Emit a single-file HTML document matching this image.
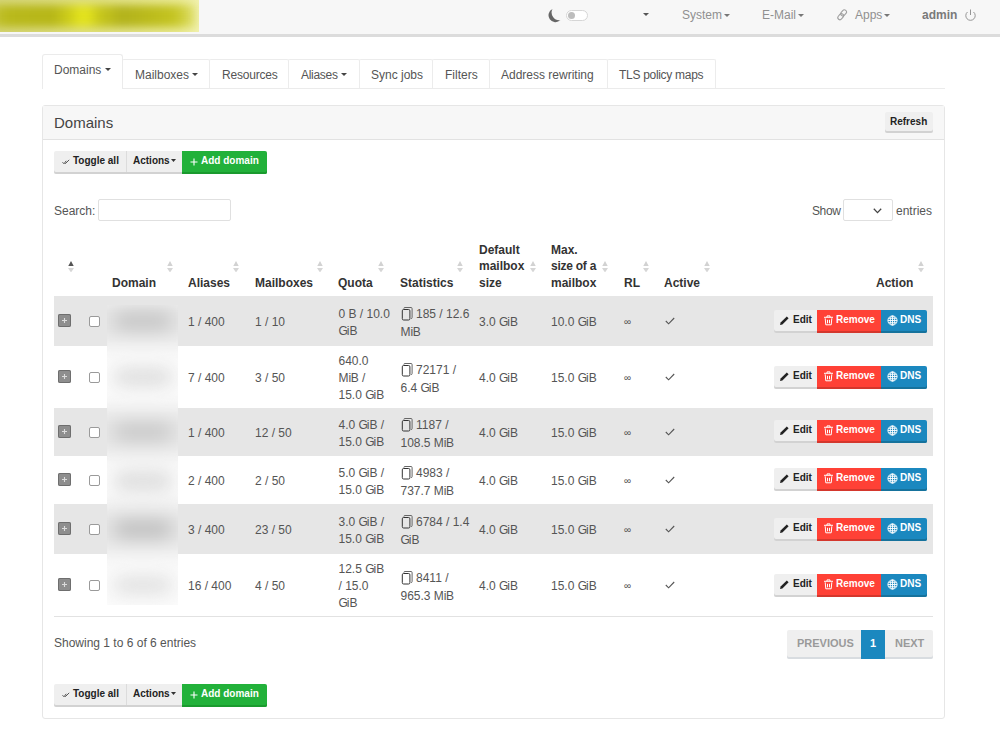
<!DOCTYPE html>
<html><head><meta charset="utf-8"><title>Domains</title>
<style>
html,body{margin:0;padding:0;background:#fff;width:1000px;height:750px;overflow:hidden;position:relative}
body{font-family:"Liberation Sans",sans-serif}
.a{position:absolute}
.t{position:absolute;white-space:nowrap;font-family:"Liberation Sans",sans-serif}
</style></head><body>
<div class="a" style="left:0px;top:0px;width:1000px;height:34px;background:#f7f7f7"></div>
<div class="a" style="left:0px;top:34px;width:1000px;height:3px;background:#dcdcdc"></div>
<div class="a" style="left:0;top:0;width:199px;height:32px;overflow:hidden;background:linear-gradient(90deg,#d6d67a,#e0e084 50%,#eaea96 90%,#f2f2b0)">
<div class="a" style="left:-8px;top:5px;width:204px;height:22px;filter:blur(4px);background:
radial-gradient(ellipse 14px 20px at 93px 11px,rgba(230,230,30,1) 0%,rgba(230,230,30,0) 100%),
linear-gradient(90deg,#c4c436 0px,#b9b91c 16px,#b6b618 60px,#cccc1a 76px,#dede1c 90px,#cccc1c 102px,#b2b21c 130px,#bcbc1c 160px,#c4c422 182px,#d6d650 196px,#e4e488 204px)"></div></div>
<svg class="a" style="left:545px;top:7.5px" width="16.5" height="16.5" viewBox="0 0 15 15"><path d="M6.8 0.9 A6.3 6.3 0 1 0 14 11.0 A7.0 7.0 0 0 1 6.8 0.9 Z" fill="#666"/></svg>
<div class="a" style="left:566px;top:9.8px;width:22.4px;height:11px;background:#fff;border:1.4px solid #d6d6d6;border-radius:6px;box-sizing:border-box"></div>
<div class="a" style="left:568.2px;top:11.8px;width:7px;height:7px;background:#bdbdbd;border-radius:50%"></div>
<svg class="a" style="left:642.5px;top:13px" width="6" height="3" viewBox="0 0 6 3"><path d="M0 0 H6 L3.0 3 Z" fill="#555"/></svg>
<div class="t" style="left:682px;top:9px;font-size:12px;line-height:12px;font-weight:400;color:#909090;">System</div>
<svg class="a" style="left:723.5px;top:13.5px" width="6" height="3" viewBox="0 0 6 3"><path d="M0 0 H6 L3.0 3 Z" fill="#777"/></svg>
<div class="t" style="left:762px;top:9px;font-size:12px;line-height:12px;font-weight:400;color:#909090;">E-Mail</div>
<svg class="a" style="left:797.5px;top:13.5px" width="6" height="3" viewBox="0 0 6 3"><path d="M0 0 H6 L3.0 3 Z" fill="#777"/></svg>
<svg class="a" style="left:836px;top:9px" width="13" height="13" viewBox="0 0 13 13"><g fill="none" stroke="#a0a0a0" stroke-width="1.1"><rect x="-2.1" y="-3.3" width="4.2" height="6.6" rx="2.1" transform="translate(7.6 3.9) rotate(40)"/><rect x="-2.1" y="-3.3" width="4.2" height="6.6" rx="2.1" transform="translate(4.7 7.7) rotate(40)"/></g></svg>
<div class="t" style="left:855px;top:9px;font-size:12px;line-height:12px;font-weight:400;color:#909090;">Apps</div>
<svg class="a" style="left:883.5px;top:13.5px" width="6" height="3" viewBox="0 0 6 3"><path d="M0 0 H6 L3.0 3 Z" fill="#777"/></svg>
<div class="t" style="left:922px;top:9px;font-size:12px;line-height:12px;font-weight:700;color:#7a7a7a;">admin</div>
<svg class="a" style="left:965px;top:9px" width="12" height="12" viewBox="0 0 12 12"><path d="M2.5 3.0 A4.7 4.7 0 1 0 8.5 3.0" fill="none" stroke="#959595" stroke-width="1"/><path d="M5.5 0.5 V6" stroke="#959595" stroke-width="1"/></svg>
<div class="a" style="left:122px;top:59px;width:88px;height:29px;border:1px solid #ececec;border-bottom:none;border-radius:2px 2px 0 0;box-sizing:border-box;background:#fff"></div>
<div class="a" style="left:209px;top:59px;width:80px;height:29px;border:1px solid #ececec;border-bottom:none;border-radius:2px 2px 0 0;box-sizing:border-box;background:#fff"></div>
<div class="a" style="left:288px;top:59px;width:72px;height:29px;border:1px solid #ececec;border-bottom:none;border-radius:2px 2px 0 0;box-sizing:border-box;background:#fff"></div>
<div class="a" style="left:359px;top:59px;width:74px;height:29px;border:1px solid #ececec;border-bottom:none;border-radius:2px 2px 0 0;box-sizing:border-box;background:#fff"></div>
<div class="a" style="left:432px;top:59px;width:58px;height:29px;border:1px solid #ececec;border-bottom:none;border-radius:2px 2px 0 0;box-sizing:border-box;background:#fff"></div>
<div class="a" style="left:489px;top:59px;width:119px;height:29px;border:1px solid #ececec;border-bottom:none;border-radius:2px 2px 0 0;box-sizing:border-box;background:#fff"></div>
<div class="a" style="left:607px;top:59px;width:109px;height:29px;border:1px solid #ececec;border-bottom:none;border-radius:2px 2px 0 0;box-sizing:border-box;background:#fff"></div>
<div class="a" style="left:42px;top:88px;width:903px;height:1px;background:#ebebeb"></div>
<div class="a" style="left:42px;top:54px;width:81px;height:35px;border:1px solid #ebebeb;border-bottom:none;border-radius:3px 3px 0 0;box-sizing:border-box;background:#fff"></div>
<div class="t" style="left:54px;top:64px;font-size:12px;line-height:12px;font-weight:400;color:#555;">Domains</div>
<svg class="a" style="left:104.5px;top:68px" width="6" height="3" viewBox="0 0 6 3"><path d="M0 0 H6 L3.0 3 Z" fill="#444"/></svg>
<div class="t" style="left:135px;top:69px;font-size:12px;line-height:12px;font-weight:400;color:#555;">Mailboxes</div>
<div class="t" style="left:222px;top:69px;font-size:12px;line-height:12px;font-weight:400;color:#555;letter-spacing:-0.2px">Resources</div>
<div class="t" style="left:301px;top:69px;font-size:12px;line-height:12px;font-weight:400;color:#555;letter-spacing:-0.3px">Aliases</div>
<div class="t" style="left:371px;top:69px;font-size:12px;line-height:12px;font-weight:400;color:#555;">Sync jobs</div>
<div class="t" style="left:445px;top:69px;font-size:12px;line-height:12px;font-weight:400;color:#555;">Filters</div>
<div class="t" style="left:501px;top:69px;font-size:12px;line-height:12px;font-weight:400;color:#555;">Address rewriting</div>
<div class="t" style="left:619px;top:69px;font-size:12px;line-height:12px;font-weight:400;color:#555;letter-spacing:-0.3px">TLS policy maps</div>
<svg class="a" style="left:191.5px;top:73px" width="6" height="3" viewBox="0 0 6 3"><path d="M0 0 H6 L3.0 3 Z" fill="#444"/></svg>
<svg class="a" style="left:341px;top:73px" width="6" height="3" viewBox="0 0 6 3"><path d="M0 0 H6 L3.0 3 Z" fill="#444"/></svg>
<div class="a" style="left:42px;top:105px;width:903px;height:614px;border:1px solid #e6e6e6;border-radius:3px;box-sizing:border-box"></div>
<div class="a" style="left:43px;top:106px;width:901px;height:34px;background:#f7f7f7;border-bottom:1px solid #e2e2e2;box-sizing:border-box"></div>
<div class="t" style="left:54px;top:115px;font-size:15px;line-height:15px;font-weight:400;color:#444;">Domains</div>
<div class="a" style="left:885px;top:112px;width:48px;height:21px;background:#efefef;border-radius:2px;box-shadow:inset 0 -2px 0 #d2d2d2"></div>
<div class="t" style="left:890px;top:117px;font-size:10px;line-height:10px;font-weight:700;color:#222;">Refresh</div>
<div class="a" style="left:54px;top:151px;width:213px;height:23px;border-radius:2px;overflow:hidden;background:#efefef;box-shadow:inset 0 -2px 0 #d2d2d2"></div>
<div class="a" style="left:126px;top:151px;width:1px;height:21px;background:#dcdcdc"></div>
<div class="a" style="left:182px;top:151px;width:85px;height:23px;background:#22b13a;box-shadow:inset 0 -2px 0 #1a9a2e;border-radius:0 2px 2px 0"></div>
<svg class="a" style="left:62px;top:159px" width="8" height="6" viewBox="0 0 8 6"><path d="M0.5 3.2 L2 4.8 L4.2 1.8 M3.2 4.8 L7.2 0.8" fill="none" stroke="#555" stroke-width="1"/></svg>
<div class="t" style="left:73px;top:156px;font-size:10px;line-height:10px;font-weight:700;color:#222;">Toggle all</div>
<div class="t" style="left:133px;top:156px;font-size:10px;line-height:10px;font-weight:700;color:#222;">Actions</div>
<svg class="a" style="left:171px;top:159px" width="5" height="3" viewBox="0 0 5 3"><path d="M0 0 H5 L2.5 3 Z" fill="#333"/></svg>
<svg class="a" style="left:190px;top:157.5px" width="8" height="8" viewBox="0 0 8 8"><path d="M4 0.5 V7.5 M0.5 4 H7.5" stroke="#fff" stroke-width="1.1"/></svg>
<div class="t" style="left:201px;top:156px;font-size:10px;line-height:10px;font-weight:700;color:#fff;">Add domain</div>
<div class="t" style="left:54px;top:205px;font-size:12px;line-height:12px;font-weight:400;color:#555;">Search:</div>
<div class="a" style="left:98px;top:199px;width:133px;height:22px;border:1px solid #e0e0e0;border-radius:2px;box-sizing:border-box;background:#fff"></div>
<div class="t" style="left:812px;top:205px;font-size:12px;line-height:12px;font-weight:400;color:#555;letter-spacing:-0.4px">Show</div>
<div class="a" style="left:843px;top:199px;width:50px;height:22px;border:1px solid #e0e0e0;border-radius:2px;box-sizing:border-box;background:#fff"></div>
<svg class="a" style="left:873px;top:207.5px" width="9" height="6" viewBox="0 0 9 6"><path d="M0.8 0.8 L4.5 4.6 L8.2 0.8" fill="none" stroke="#444" stroke-width="1.3"/></svg>
<div class="t" style="left:896px;top:205px;font-size:12px;line-height:12px;font-weight:400;color:#555;">entries</div>
<svg class="a" style="left:68.3px;top:260.5px" width="6" height="5.5" viewBox="0 0 6 5.5"><path d="M3 0 L6 5.5 H0 Z" fill="#555"/></svg>
<svg class="a" style="left:68.3px;top:267.5px" width="6" height="4.5" viewBox="0 0 6 4.5"><path d="M0 0 H6 L3 4.5 Z" fill="#d6d6d6"/></svg>
<svg class="a" style="left:167px;top:260.5px" width="6" height="5.5" viewBox="0 0 6 5.5"><path d="M3 0 L6 5.5 H0 Z" fill="#d2d2d2"/></svg>
<svg class="a" style="left:167px;top:267.5px" width="6" height="4.5" viewBox="0 0 6 4.5"><path d="M0 0 H6 L3 4.5 Z" fill="#d6d6d6"/></svg>
<svg class="a" style="left:232.6px;top:260.5px" width="6" height="5.5" viewBox="0 0 6 5.5"><path d="M3 0 L6 5.5 H0 Z" fill="#d2d2d2"/></svg>
<svg class="a" style="left:232.6px;top:267.5px" width="6" height="4.5" viewBox="0 0 6 4.5"><path d="M0 0 H6 L3 4.5 Z" fill="#d6d6d6"/></svg>
<svg class="a" style="left:316.6px;top:260.5px" width="6" height="5.5" viewBox="0 0 6 5.5"><path d="M3 0 L6 5.5 H0 Z" fill="#d2d2d2"/></svg>
<svg class="a" style="left:316.6px;top:267.5px" width="6" height="4.5" viewBox="0 0 6 4.5"><path d="M0 0 H6 L3 4.5 Z" fill="#d6d6d6"/></svg>
<svg class="a" style="left:378px;top:260.5px" width="6" height="5.5" viewBox="0 0 6 5.5"><path d="M3 0 L6 5.5 H0 Z" fill="#d2d2d2"/></svg>
<svg class="a" style="left:378px;top:267.5px" width="6" height="4.5" viewBox="0 0 6 4.5"><path d="M0 0 H6 L3 4.5 Z" fill="#d6d6d6"/></svg>
<svg class="a" style="left:457.3px;top:260.5px" width="6" height="5.5" viewBox="0 0 6 5.5"><path d="M3 0 L6 5.5 H0 Z" fill="#d2d2d2"/></svg>
<svg class="a" style="left:457.3px;top:267.5px" width="6" height="4.5" viewBox="0 0 6 4.5"><path d="M0 0 H6 L3 4.5 Z" fill="#d6d6d6"/></svg>
<svg class="a" style="left:529.8px;top:260.5px" width="6" height="5.5" viewBox="0 0 6 5.5"><path d="M3 0 L6 5.5 H0 Z" fill="#d2d2d2"/></svg>
<svg class="a" style="left:529.8px;top:267.5px" width="6" height="4.5" viewBox="0 0 6 4.5"><path d="M0 0 H6 L3 4.5 Z" fill="#d6d6d6"/></svg>
<svg class="a" style="left:601.8px;top:260.5px" width="6" height="5.5" viewBox="0 0 6 5.5"><path d="M3 0 L6 5.5 H0 Z" fill="#d2d2d2"/></svg>
<svg class="a" style="left:601.8px;top:267.5px" width="6" height="4.5" viewBox="0 0 6 4.5"><path d="M0 0 H6 L3 4.5 Z" fill="#d6d6d6"/></svg>
<svg class="a" style="left:642.6px;top:260.5px" width="6" height="5.5" viewBox="0 0 6 5.5"><path d="M3 0 L6 5.5 H0 Z" fill="#d2d2d2"/></svg>
<svg class="a" style="left:642.6px;top:267.5px" width="6" height="4.5" viewBox="0 0 6 4.5"><path d="M0 0 H6 L3 4.5 Z" fill="#d6d6d6"/></svg>
<svg class="a" style="left:704px;top:260.5px" width="6" height="5.5" viewBox="0 0 6 5.5"><path d="M3 0 L6 5.5 H0 Z" fill="#d2d2d2"/></svg>
<svg class="a" style="left:704px;top:267.5px" width="6" height="4.5" viewBox="0 0 6 4.5"><path d="M0 0 H6 L3 4.5 Z" fill="#d6d6d6"/></svg>
<svg class="a" style="left:917.6px;top:260.5px" width="6" height="5.5" viewBox="0 0 6 5.5"><path d="M3 0 L6 5.5 H0 Z" fill="#d2d2d2"/></svg>
<svg class="a" style="left:917.6px;top:267.5px" width="6" height="4.5" viewBox="0 0 6 4.5"><path d="M0 0 H6 L3 4.5 Z" fill="#d6d6d6"/></svg>
<div class="t" style="left:112px;top:277px;font-size:12px;line-height:12px;font-weight:700;color:#333;">Domain</div>
<div class="t" style="left:188px;top:277px;font-size:12px;line-height:12px;font-weight:700;color:#333;">Aliases</div>
<div class="t" style="left:255px;top:277px;font-size:12px;line-height:12px;font-weight:700;color:#333;">Mailboxes</div>
<div class="t" style="left:338px;top:277px;font-size:12px;line-height:12px;font-weight:700;color:#333;">Quota</div>
<div class="t" style="left:400px;top:277px;font-size:12px;line-height:12px;font-weight:700;color:#333;">Statistics</div>
<div class="t" style="left:479px;top:244px;font-size:12px;line-height:12px;font-weight:700;color:#333;">Default</div>
<div class="t" style="left:479px;top:260px;font-size:12px;line-height:12px;font-weight:700;color:#333;">mailbox</div>
<div class="t" style="left:479px;top:277px;font-size:12px;line-height:12px;font-weight:700;color:#333;">size</div>
<div class="t" style="left:551px;top:244px;font-size:12px;line-height:12px;font-weight:700;color:#333;">Max.</div>
<div class="t" style="left:551px;top:260px;font-size:12px;line-height:12px;font-weight:700;color:#333;letter-spacing:-0.25px">size of a</div>
<div class="t" style="left:551px;top:277px;font-size:12px;line-height:12px;font-weight:700;color:#333;">mailbox</div>
<div class="t" style="left:624px;top:277px;font-size:12px;line-height:12px;font-weight:700;color:#333;">RL</div>
<div class="t" style="left:664px;top:277px;font-size:12px;line-height:12px;font-weight:700;color:#333;">Active</div>
<div class="t" style="left:876px;top:277px;font-size:12px;line-height:12px;font-weight:700;color:#333;">Action</div>
<div class="a" style="left:54px;top:296px;width:879px;height:50px;background:#e6e6e6"></div>
<div class="a" style="left:58px;top:314px;width:13px;height:13px;background:#8e8e8e;border-radius:2px;box-shadow:inset 0 0 0 1px #6e6e6e"></div>
<svg class="a" style="left:58px;top:314px" width="13" height="13" viewBox="0 0 13 13"><path d="M6.5 4 V9 M4 6.5 H9" stroke="#dcdcdc" stroke-width="1.1"/></svg>
<div class="a" style="left:89px;top:316px;width:11px;height:11px;background:#fff;border:1px solid #9a9a9a;border-radius:2px;box-sizing:border-box"></div>
<div class="t" style="left:188px;top:316px;font-size:12px;line-height:12px;font-weight:400;color:#555;">1 / 400</div>
<div class="t" style="left:255px;top:316px;font-size:12px;line-height:12px;font-weight:400;color:#555;">1 / 10</div>
<div class="t" style="left:338.5px;top:308px;font-size:12px;line-height:12px;font-weight:400;color:#555;">0 B / 10.0</div>
<div class="t" style="left:338.5px;top:325px;font-size:12px;line-height:12px;font-weight:400;color:#555;"><span style="letter-spacing:-1px">G</span>iB</div>
<svg class="a" style="left:400px;top:306px" width="14" height="16" viewBox="0 0 14 16"><path d="M3.8 2.6 Q3.8 1.5 5 1.5 H11 Q12.1 1.5 12.1 2.6 V11.5 Q12.1 12.6 11 12.6" fill="none" stroke="#666" stroke-width="1"/><rect x="2.3" y="3.5" width="7.6" height="10.5" rx="1.3" fill="none" stroke="#333" stroke-width="1"/></svg>
<div class="t" style="left:416px;top:308px;font-size:12px;line-height:12px;font-weight:400;color:#555;">185 / 12.6</div>
<div class="t" style="left:400.5px;top:326px;font-size:12px;line-height:12px;font-weight:400;color:#555;">M<span style="letter-spacing:-0.5px">i</span>B</div>
<div class="t" style="left:479px;top:316px;font-size:12px;line-height:12px;font-weight:400;color:#555;">3.0 <span style="letter-spacing:-1px">G</span>iB</div>
<div class="t" style="left:551px;top:316px;font-size:12px;line-height:12px;font-weight:400;color:#555;">10.0 <span style="letter-spacing:-1px">G</span>iB</div>
<div class="t" style="left:624px;top:317px;font-size:10px;line-height:10px;font-weight:400;color:#555;">&#8734;</div>
<svg class="a" style="left:665px;top:317px" width="10" height="8" viewBox="0 0 10 8"><path d="M0.8 4 L3.6 6.8 L9.2 1" fill="none" stroke="#555" stroke-width="1.1"/></svg>
<div class="a" style="left:774px;top:310px;width:43px;height:23px;background:#efefef;border-radius:2px 0 0 2px;box-shadow:inset 0 -2px 0 #d2d2d2"></div>
<svg class="a" style="left:779px;top:315px" width="11" height="11" viewBox="0 0 11 11"><path d="M1 10 L1.6 7.6 L7.8 1.4 L9.6 3.2 L3.4 9.4 Z" fill="#222"/></svg>
<div class="t" style="left:793px;top:315px;font-size:10px;line-height:10px;font-weight:700;color:#222;">Edit</div>
<div class="a" style="left:817px;top:310px;width:64px;height:23px;background:#ff4136;box-shadow:inset 0 -2px 0 #d4372d"></div>
<svg class="a" style="left:823px;top:315px" width="11" height="11" viewBox="0 0 11 11"><g fill="none" stroke="#fff" stroke-width="1"><path d="M1 2.3 H10 M4 2.3 V0.9 H7 V2.3 M2.2 3.3 L2.8 9.8 H8.2 L8.8 3.3 M4.5 4.8 V8.3 M6.5 4.8 V8.3"/></g></svg>
<div class="t" style="left:836px;top:315px;font-size:10px;line-height:10px;font-weight:700;color:#fff;">Remove</div>
<div class="a" style="left:881px;top:310px;width:46px;height:23px;background:#1b88bf;border-radius:0 2px 2px 0;box-shadow:inset 0 -2px 0 #16729c"></div>
<svg class="a" style="left:887px;top:315px" width="11" height="11" viewBox="0 0 11 11"><g fill="none" stroke="#fff" stroke-width="0.9"><circle cx="5.5" cy="5.5" r="4.6"/><ellipse cx="5.5" cy="5.5" rx="2.2" ry="4.6"/><path d="M5.5 0.9 V10.1 M0.9 5.5 H10.1 M1.4 3.3 H9.6 M1.4 7.7 H9.6"/></g></svg>
<div class="t" style="left:900px;top:315px;font-size:10px;line-height:10px;font-weight:700;color:#fff;">DNS</div>
<div class="a" style="left:58px;top:370px;width:13px;height:13px;background:#8e8e8e;border-radius:2px;box-shadow:inset 0 0 0 1px #6e6e6e"></div>
<svg class="a" style="left:58px;top:370px" width="13" height="13" viewBox="0 0 13 13"><path d="M6.5 4 V9 M4 6.5 H9" stroke="#dcdcdc" stroke-width="1.1"/></svg>
<div class="a" style="left:89px;top:372px;width:11px;height:11px;background:#fff;border:1px solid #9a9a9a;border-radius:2px;box-sizing:border-box"></div>
<div class="t" style="left:188px;top:372px;font-size:12px;line-height:12px;font-weight:400;color:#555;">7 / 400</div>
<div class="t" style="left:255px;top:372px;font-size:12px;line-height:12px;font-weight:400;color:#555;">3 / 50</div>
<div class="t" style="left:338.5px;top:355px;font-size:12px;line-height:12px;font-weight:400;color:#555;">640.0</div>
<div class="t" style="left:338.5px;top:372px;font-size:12px;line-height:12px;font-weight:400;color:#555;">M<span style="letter-spacing:-0.5px">i</span>B /</div>
<div class="t" style="left:338.5px;top:389px;font-size:12px;line-height:12px;font-weight:400;color:#555;">15.0 <span style="letter-spacing:-1px">G</span>iB</div>
<svg class="a" style="left:400px;top:362px" width="14" height="16" viewBox="0 0 14 16"><path d="M3.8 2.6 Q3.8 1.5 5 1.5 H11 Q12.1 1.5 12.1 2.6 V11.5 Q12.1 12.6 11 12.6" fill="none" stroke="#666" stroke-width="1"/><rect x="2.3" y="3.5" width="7.6" height="10.5" rx="1.3" fill="none" stroke="#333" stroke-width="1"/></svg>
<div class="t" style="left:416px;top:364px;font-size:12px;line-height:12px;font-weight:400;color:#555;">72171 /</div>
<div class="t" style="left:400.5px;top:382px;font-size:12px;line-height:12px;font-weight:400;color:#555;">6.4 <span style="letter-spacing:-1px">G</span>iB</div>
<div class="t" style="left:479px;top:372px;font-size:12px;line-height:12px;font-weight:400;color:#555;">4.0 <span style="letter-spacing:-1px">G</span>iB</div>
<div class="t" style="left:551px;top:372px;font-size:12px;line-height:12px;font-weight:400;color:#555;">15.0 <span style="letter-spacing:-1px">G</span>iB</div>
<div class="t" style="left:624px;top:373px;font-size:10px;line-height:10px;font-weight:400;color:#555;">&#8734;</div>
<svg class="a" style="left:665px;top:373px" width="10" height="8" viewBox="0 0 10 8"><path d="M0.8 4 L3.6 6.8 L9.2 1" fill="none" stroke="#555" stroke-width="1.1"/></svg>
<div class="a" style="left:774px;top:366px;width:43px;height:23px;background:#efefef;border-radius:2px 0 0 2px;box-shadow:inset 0 -2px 0 #d2d2d2"></div>
<svg class="a" style="left:779px;top:371px" width="11" height="11" viewBox="0 0 11 11"><path d="M1 10 L1.6 7.6 L7.8 1.4 L9.6 3.2 L3.4 9.4 Z" fill="#222"/></svg>
<div class="t" style="left:793px;top:371px;font-size:10px;line-height:10px;font-weight:700;color:#222;">Edit</div>
<div class="a" style="left:817px;top:366px;width:64px;height:23px;background:#ff4136;box-shadow:inset 0 -2px 0 #d4372d"></div>
<svg class="a" style="left:823px;top:371px" width="11" height="11" viewBox="0 0 11 11"><g fill="none" stroke="#fff" stroke-width="1"><path d="M1 2.3 H10 M4 2.3 V0.9 H7 V2.3 M2.2 3.3 L2.8 9.8 H8.2 L8.8 3.3 M4.5 4.8 V8.3 M6.5 4.8 V8.3"/></g></svg>
<div class="t" style="left:836px;top:371px;font-size:10px;line-height:10px;font-weight:700;color:#fff;">Remove</div>
<div class="a" style="left:881px;top:366px;width:46px;height:23px;background:#1b88bf;border-radius:0 2px 2px 0;box-shadow:inset 0 -2px 0 #16729c"></div>
<svg class="a" style="left:887px;top:371px" width="11" height="11" viewBox="0 0 11 11"><g fill="none" stroke="#fff" stroke-width="0.9"><circle cx="5.5" cy="5.5" r="4.6"/><ellipse cx="5.5" cy="5.5" rx="2.2" ry="4.6"/><path d="M5.5 0.9 V10.1 M0.9 5.5 H10.1 M1.4 3.3 H9.6 M1.4 7.7 H9.6"/></g></svg>
<div class="t" style="left:900px;top:371px;font-size:10px;line-height:10px;font-weight:700;color:#fff;">DNS</div>
<div class="a" style="left:54px;top:408px;width:879px;height:48px;background:#e6e6e6"></div>
<div class="a" style="left:58px;top:425px;width:13px;height:13px;background:#8e8e8e;border-radius:2px;box-shadow:inset 0 0 0 1px #6e6e6e"></div>
<svg class="a" style="left:58px;top:425px" width="13" height="13" viewBox="0 0 13 13"><path d="M6.5 4 V9 M4 6.5 H9" stroke="#dcdcdc" stroke-width="1.1"/></svg>
<div class="a" style="left:89px;top:427px;width:11px;height:11px;background:#fff;border:1px solid #9a9a9a;border-radius:2px;box-sizing:border-box"></div>
<div class="t" style="left:188px;top:427px;font-size:12px;line-height:12px;font-weight:400;color:#555;">1 / 400</div>
<div class="t" style="left:255px;top:427px;font-size:12px;line-height:12px;font-weight:400;color:#555;">12 / 50</div>
<div class="t" style="left:338.5px;top:419px;font-size:12px;line-height:12px;font-weight:400;color:#555;">4.0 <span style="letter-spacing:-1px">G</span>iB /</div>
<div class="t" style="left:338.5px;top:436px;font-size:12px;line-height:12px;font-weight:400;color:#555;">15.0 <span style="letter-spacing:-1px">G</span>iB</div>
<svg class="a" style="left:400px;top:417px" width="14" height="16" viewBox="0 0 14 16"><path d="M3.8 2.6 Q3.8 1.5 5 1.5 H11 Q12.1 1.5 12.1 2.6 V11.5 Q12.1 12.6 11 12.6" fill="none" stroke="#666" stroke-width="1"/><rect x="2.3" y="3.5" width="7.6" height="10.5" rx="1.3" fill="none" stroke="#333" stroke-width="1"/></svg>
<div class="t" style="left:416px;top:419px;font-size:12px;line-height:12px;font-weight:400;color:#555;">1187 /</div>
<div class="t" style="left:400.5px;top:437px;font-size:12px;line-height:12px;font-weight:400;color:#555;">108.5 M<span style="letter-spacing:-0.5px">i</span>B</div>
<div class="t" style="left:479px;top:427px;font-size:12px;line-height:12px;font-weight:400;color:#555;">4.0 <span style="letter-spacing:-1px">G</span>iB</div>
<div class="t" style="left:551px;top:427px;font-size:12px;line-height:12px;font-weight:400;color:#555;">15.0 <span style="letter-spacing:-1px">G</span>iB</div>
<div class="t" style="left:624px;top:428px;font-size:10px;line-height:10px;font-weight:400;color:#555;">&#8734;</div>
<svg class="a" style="left:665px;top:428px" width="10" height="8" viewBox="0 0 10 8"><path d="M0.8 4 L3.6 6.8 L9.2 1" fill="none" stroke="#555" stroke-width="1.1"/></svg>
<div class="a" style="left:774px;top:420px;width:43px;height:23px;background:#efefef;border-radius:2px 0 0 2px;box-shadow:inset 0 -2px 0 #d2d2d2"></div>
<svg class="a" style="left:779px;top:425px" width="11" height="11" viewBox="0 0 11 11"><path d="M1 10 L1.6 7.6 L7.8 1.4 L9.6 3.2 L3.4 9.4 Z" fill="#222"/></svg>
<div class="t" style="left:793px;top:425px;font-size:10px;line-height:10px;font-weight:700;color:#222;">Edit</div>
<div class="a" style="left:817px;top:420px;width:64px;height:23px;background:#ff4136;box-shadow:inset 0 -2px 0 #d4372d"></div>
<svg class="a" style="left:823px;top:425px" width="11" height="11" viewBox="0 0 11 11"><g fill="none" stroke="#fff" stroke-width="1"><path d="M1 2.3 H10 M4 2.3 V0.9 H7 V2.3 M2.2 3.3 L2.8 9.8 H8.2 L8.8 3.3 M4.5 4.8 V8.3 M6.5 4.8 V8.3"/></g></svg>
<div class="t" style="left:836px;top:425px;font-size:10px;line-height:10px;font-weight:700;color:#fff;">Remove</div>
<div class="a" style="left:881px;top:420px;width:46px;height:23px;background:#1b88bf;border-radius:0 2px 2px 0;box-shadow:inset 0 -2px 0 #16729c"></div>
<svg class="a" style="left:887px;top:425px" width="11" height="11" viewBox="0 0 11 11"><g fill="none" stroke="#fff" stroke-width="0.9"><circle cx="5.5" cy="5.5" r="4.6"/><ellipse cx="5.5" cy="5.5" rx="2.2" ry="4.6"/><path d="M5.5 0.9 V10.1 M0.9 5.5 H10.1 M1.4 3.3 H9.6 M1.4 7.7 H9.6"/></g></svg>
<div class="t" style="left:900px;top:425px;font-size:10px;line-height:10px;font-weight:700;color:#fff;">DNS</div>
<div class="a" style="left:58px;top:473px;width:13px;height:13px;background:#8e8e8e;border-radius:2px;box-shadow:inset 0 0 0 1px #6e6e6e"></div>
<svg class="a" style="left:58px;top:473px" width="13" height="13" viewBox="0 0 13 13"><path d="M6.5 4 V9 M4 6.5 H9" stroke="#dcdcdc" stroke-width="1.1"/></svg>
<div class="a" style="left:89px;top:475px;width:11px;height:11px;background:#fff;border:1px solid #9a9a9a;border-radius:2px;box-sizing:border-box"></div>
<div class="t" style="left:188px;top:475px;font-size:12px;line-height:12px;font-weight:400;color:#555;">2 / 400</div>
<div class="t" style="left:255px;top:475px;font-size:12px;line-height:12px;font-weight:400;color:#555;">2 / 50</div>
<div class="t" style="left:338.5px;top:467px;font-size:12px;line-height:12px;font-weight:400;color:#555;">5.0 <span style="letter-spacing:-1px">G</span>iB /</div>
<div class="t" style="left:338.5px;top:484px;font-size:12px;line-height:12px;font-weight:400;color:#555;">15.0 <span style="letter-spacing:-1px">G</span>iB</div>
<svg class="a" style="left:400px;top:465px" width="14" height="16" viewBox="0 0 14 16"><path d="M3.8 2.6 Q3.8 1.5 5 1.5 H11 Q12.1 1.5 12.1 2.6 V11.5 Q12.1 12.6 11 12.6" fill="none" stroke="#666" stroke-width="1"/><rect x="2.3" y="3.5" width="7.6" height="10.5" rx="1.3" fill="none" stroke="#333" stroke-width="1"/></svg>
<div class="t" style="left:416px;top:467px;font-size:12px;line-height:12px;font-weight:400;color:#555;">4983 /</div>
<div class="t" style="left:400.5px;top:485px;font-size:12px;line-height:12px;font-weight:400;color:#555;">737.7 M<span style="letter-spacing:-0.5px">i</span>B</div>
<div class="t" style="left:479px;top:475px;font-size:12px;line-height:12px;font-weight:400;color:#555;">4.0 <span style="letter-spacing:-1px">G</span>iB</div>
<div class="t" style="left:551px;top:475px;font-size:12px;line-height:12px;font-weight:400;color:#555;">15.0 <span style="letter-spacing:-1px">G</span>iB</div>
<div class="t" style="left:624px;top:476px;font-size:10px;line-height:10px;font-weight:400;color:#555;">&#8734;</div>
<svg class="a" style="left:665px;top:476px" width="10" height="8" viewBox="0 0 10 8"><path d="M0.8 4 L3.6 6.8 L9.2 1" fill="none" stroke="#555" stroke-width="1.1"/></svg>
<div class="a" style="left:774px;top:468px;width:43px;height:23px;background:#efefef;border-radius:2px 0 0 2px;box-shadow:inset 0 -2px 0 #d2d2d2"></div>
<svg class="a" style="left:779px;top:473px" width="11" height="11" viewBox="0 0 11 11"><path d="M1 10 L1.6 7.6 L7.8 1.4 L9.6 3.2 L3.4 9.4 Z" fill="#222"/></svg>
<div class="t" style="left:793px;top:473px;font-size:10px;line-height:10px;font-weight:700;color:#222;">Edit</div>
<div class="a" style="left:817px;top:468px;width:64px;height:23px;background:#ff4136;box-shadow:inset 0 -2px 0 #d4372d"></div>
<svg class="a" style="left:823px;top:473px" width="11" height="11" viewBox="0 0 11 11"><g fill="none" stroke="#fff" stroke-width="1"><path d="M1 2.3 H10 M4 2.3 V0.9 H7 V2.3 M2.2 3.3 L2.8 9.8 H8.2 L8.8 3.3 M4.5 4.8 V8.3 M6.5 4.8 V8.3"/></g></svg>
<div class="t" style="left:836px;top:473px;font-size:10px;line-height:10px;font-weight:700;color:#fff;">Remove</div>
<div class="a" style="left:881px;top:468px;width:46px;height:23px;background:#1b88bf;border-radius:0 2px 2px 0;box-shadow:inset 0 -2px 0 #16729c"></div>
<svg class="a" style="left:887px;top:473px" width="11" height="11" viewBox="0 0 11 11"><g fill="none" stroke="#fff" stroke-width="0.9"><circle cx="5.5" cy="5.5" r="4.6"/><ellipse cx="5.5" cy="5.5" rx="2.2" ry="4.6"/><path d="M5.5 0.9 V10.1 M0.9 5.5 H10.1 M1.4 3.3 H9.6 M1.4 7.7 H9.6"/></g></svg>
<div class="t" style="left:900px;top:473px;font-size:10px;line-height:10px;font-weight:700;color:#fff;">DNS</div>
<div class="a" style="left:54px;top:504px;width:879px;height:50px;background:#e6e6e6"></div>
<div class="a" style="left:58px;top:522px;width:13px;height:13px;background:#8e8e8e;border-radius:2px;box-shadow:inset 0 0 0 1px #6e6e6e"></div>
<svg class="a" style="left:58px;top:522px" width="13" height="13" viewBox="0 0 13 13"><path d="M6.5 4 V9 M4 6.5 H9" stroke="#dcdcdc" stroke-width="1.1"/></svg>
<div class="a" style="left:89px;top:524px;width:11px;height:11px;background:#fff;border:1px solid #9a9a9a;border-radius:2px;box-sizing:border-box"></div>
<div class="t" style="left:188px;top:524px;font-size:12px;line-height:12px;font-weight:400;color:#555;">3 / 400</div>
<div class="t" style="left:255px;top:524px;font-size:12px;line-height:12px;font-weight:400;color:#555;">23 / 50</div>
<div class="t" style="left:338.5px;top:516px;font-size:12px;line-height:12px;font-weight:400;color:#555;">3.0 <span style="letter-spacing:-1px">G</span>iB /</div>
<div class="t" style="left:338.5px;top:533px;font-size:12px;line-height:12px;font-weight:400;color:#555;">15.0 <span style="letter-spacing:-1px">G</span>iB</div>
<svg class="a" style="left:400px;top:514px" width="14" height="16" viewBox="0 0 14 16"><path d="M3.8 2.6 Q3.8 1.5 5 1.5 H11 Q12.1 1.5 12.1 2.6 V11.5 Q12.1 12.6 11 12.6" fill="none" stroke="#666" stroke-width="1"/><rect x="2.3" y="3.5" width="7.6" height="10.5" rx="1.3" fill="none" stroke="#333" stroke-width="1"/></svg>
<div class="t" style="left:416px;top:516px;font-size:12px;line-height:12px;font-weight:400;color:#555;">6784 / 1.4</div>
<div class="t" style="left:400.5px;top:534px;font-size:12px;line-height:12px;font-weight:400;color:#555;"><span style="letter-spacing:-1px">G</span>iB</div>
<div class="t" style="left:479px;top:524px;font-size:12px;line-height:12px;font-weight:400;color:#555;">4.0 <span style="letter-spacing:-1px">G</span>iB</div>
<div class="t" style="left:551px;top:524px;font-size:12px;line-height:12px;font-weight:400;color:#555;">15.0 <span style="letter-spacing:-1px">G</span>iB</div>
<div class="t" style="left:624px;top:525px;font-size:10px;line-height:10px;font-weight:400;color:#555;">&#8734;</div>
<svg class="a" style="left:665px;top:525px" width="10" height="8" viewBox="0 0 10 8"><path d="M0.8 4 L3.6 6.8 L9.2 1" fill="none" stroke="#555" stroke-width="1.1"/></svg>
<div class="a" style="left:774px;top:518px;width:43px;height:23px;background:#efefef;border-radius:2px 0 0 2px;box-shadow:inset 0 -2px 0 #d2d2d2"></div>
<svg class="a" style="left:779px;top:523px" width="11" height="11" viewBox="0 0 11 11"><path d="M1 10 L1.6 7.6 L7.8 1.4 L9.6 3.2 L3.4 9.4 Z" fill="#222"/></svg>
<div class="t" style="left:793px;top:523px;font-size:10px;line-height:10px;font-weight:700;color:#222;">Edit</div>
<div class="a" style="left:817px;top:518px;width:64px;height:23px;background:#ff4136;box-shadow:inset 0 -2px 0 #d4372d"></div>
<svg class="a" style="left:823px;top:523px" width="11" height="11" viewBox="0 0 11 11"><g fill="none" stroke="#fff" stroke-width="1"><path d="M1 2.3 H10 M4 2.3 V0.9 H7 V2.3 M2.2 3.3 L2.8 9.8 H8.2 L8.8 3.3 M4.5 4.8 V8.3 M6.5 4.8 V8.3"/></g></svg>
<div class="t" style="left:836px;top:523px;font-size:10px;line-height:10px;font-weight:700;color:#fff;">Remove</div>
<div class="a" style="left:881px;top:518px;width:46px;height:23px;background:#1b88bf;border-radius:0 2px 2px 0;box-shadow:inset 0 -2px 0 #16729c"></div>
<svg class="a" style="left:887px;top:523px" width="11" height="11" viewBox="0 0 11 11"><g fill="none" stroke="#fff" stroke-width="0.9"><circle cx="5.5" cy="5.5" r="4.6"/><ellipse cx="5.5" cy="5.5" rx="2.2" ry="4.6"/><path d="M5.5 0.9 V10.1 M0.9 5.5 H10.1 M1.4 3.3 H9.6 M1.4 7.7 H9.6"/></g></svg>
<div class="t" style="left:900px;top:523px;font-size:10px;line-height:10px;font-weight:700;color:#fff;">DNS</div>
<div class="a" style="left:58px;top:578px;width:13px;height:13px;background:#8e8e8e;border-radius:2px;box-shadow:inset 0 0 0 1px #6e6e6e"></div>
<svg class="a" style="left:58px;top:578px" width="13" height="13" viewBox="0 0 13 13"><path d="M6.5 4 V9 M4 6.5 H9" stroke="#dcdcdc" stroke-width="1.1"/></svg>
<div class="a" style="left:89px;top:580px;width:11px;height:11px;background:#fff;border:1px solid #9a9a9a;border-radius:2px;box-sizing:border-box"></div>
<div class="t" style="left:188px;top:580px;font-size:12px;line-height:12px;font-weight:400;color:#555;">16 / 400</div>
<div class="t" style="left:255px;top:580px;font-size:12px;line-height:12px;font-weight:400;color:#555;">4 / 50</div>
<div class="t" style="left:338.5px;top:563px;font-size:12px;line-height:12px;font-weight:400;color:#555;">12.5 <span style="letter-spacing:-1px">G</span>iB</div>
<div class="t" style="left:338.5px;top:580px;font-size:12px;line-height:12px;font-weight:400;color:#555;">/ 15.0</div>
<div class="t" style="left:338.5px;top:597px;font-size:12px;line-height:12px;font-weight:400;color:#555;"><span style="letter-spacing:-1px">G</span>iB</div>
<svg class="a" style="left:400px;top:570px" width="14" height="16" viewBox="0 0 14 16"><path d="M3.8 2.6 Q3.8 1.5 5 1.5 H11 Q12.1 1.5 12.1 2.6 V11.5 Q12.1 12.6 11 12.6" fill="none" stroke="#666" stroke-width="1"/><rect x="2.3" y="3.5" width="7.6" height="10.5" rx="1.3" fill="none" stroke="#333" stroke-width="1"/></svg>
<div class="t" style="left:416px;top:572px;font-size:12px;line-height:12px;font-weight:400;color:#555;">8411 /</div>
<div class="t" style="left:400.5px;top:590px;font-size:12px;line-height:12px;font-weight:400;color:#555;">965.3 M<span style="letter-spacing:-0.5px">i</span>B</div>
<div class="t" style="left:479px;top:580px;font-size:12px;line-height:12px;font-weight:400;color:#555;">4.0 <span style="letter-spacing:-1px">G</span>iB</div>
<div class="t" style="left:551px;top:580px;font-size:12px;line-height:12px;font-weight:400;color:#555;">15.0 <span style="letter-spacing:-1px">G</span>iB</div>
<div class="t" style="left:624px;top:581px;font-size:10px;line-height:10px;font-weight:400;color:#555;">&#8734;</div>
<svg class="a" style="left:665px;top:581px" width="10" height="8" viewBox="0 0 10 8"><path d="M0.8 4 L3.6 6.8 L9.2 1" fill="none" stroke="#555" stroke-width="1.1"/></svg>
<div class="a" style="left:774px;top:574px;width:43px;height:23px;background:#efefef;border-radius:2px 0 0 2px;box-shadow:inset 0 -2px 0 #d2d2d2"></div>
<svg class="a" style="left:779px;top:579px" width="11" height="11" viewBox="0 0 11 11"><path d="M1 10 L1.6 7.6 L7.8 1.4 L9.6 3.2 L3.4 9.4 Z" fill="#222"/></svg>
<div class="t" style="left:793px;top:579px;font-size:10px;line-height:10px;font-weight:700;color:#222;">Edit</div>
<div class="a" style="left:817px;top:574px;width:64px;height:23px;background:#ff4136;box-shadow:inset 0 -2px 0 #d4372d"></div>
<svg class="a" style="left:823px;top:579px" width="11" height="11" viewBox="0 0 11 11"><g fill="none" stroke="#fff" stroke-width="1"><path d="M1 2.3 H10 M4 2.3 V0.9 H7 V2.3 M2.2 3.3 L2.8 9.8 H8.2 L8.8 3.3 M4.5 4.8 V8.3 M6.5 4.8 V8.3"/></g></svg>
<div class="t" style="left:836px;top:579px;font-size:10px;line-height:10px;font-weight:700;color:#fff;">Remove</div>
<div class="a" style="left:881px;top:574px;width:46px;height:23px;background:#1b88bf;border-radius:0 2px 2px 0;box-shadow:inset 0 -2px 0 #16729c"></div>
<svg class="a" style="left:887px;top:579px" width="11" height="11" viewBox="0 0 11 11"><g fill="none" stroke="#fff" stroke-width="0.9"><circle cx="5.5" cy="5.5" r="4.6"/><ellipse cx="5.5" cy="5.5" rx="2.2" ry="4.6"/><path d="M5.5 0.9 V10.1 M0.9 5.5 H10.1 M1.4 3.3 H9.6 M1.4 7.7 H9.6"/></g></svg>
<div class="t" style="left:900px;top:579px;font-size:10px;line-height:10px;font-weight:700;color:#fff;">DNS</div>
<div class="a" style="left:107px;top:305px;width:71px;height:300px;overflow:hidden;background:#fbfbfb"><div class="a" style="left:0;top:0;width:71px;height:300px;filter:blur(9px)"><div class="a" style="left:-20px;top:-9px;width:111px;height:50px;background:#e6e6e6"></div><div class="a" style="left:-20px;top:103px;width:111px;height:48px;background:#e6e6e6"></div><div class="a" style="left:-20px;top:199px;width:111px;height:50px;background:#e6e6e6"></div><div class="a" style="left:6px;top:7px;width:60px;height:18px;background:#c4c4c4;border-radius:9px"></div><div class="a" style="left:6px;top:63px;width:60px;height:18px;background:#dcdcdc;border-radius:9px"></div><div class="a" style="left:6px;top:118px;width:60px;height:18px;background:#c8c8c8;border-radius:9px"></div><div class="a" style="left:6px;top:167px;width:60px;height:18px;background:#dadada;border-radius:9px"></div><div class="a" style="left:6px;top:215px;width:60px;height:18px;background:#bebebe;border-radius:9px"></div><div class="a" style="left:6px;top:271px;width:60px;height:18px;background:#e0e0e0;border-radius:9px"></div></div></div>
<div class="a" style="left:54px;top:616px;width:879px;height:1px;background:#e2e2e2"></div>
<div class="t" style="left:54px;top:637px;font-size:12px;line-height:12px;font-weight:400;color:#555;">Showing 1 to 6 of 6 entries</div>
<div class="a" style="left:787px;top:630px;width:146px;height:29px;background:#efefef;border-radius:2px;box-shadow:inset 0 -2px 0 #d8dce0"></div>
<div class="a" style="left:861px;top:630px;width:24px;height:29px;background:#1b88bf"></div>
<div class="t" style="left:797px;top:638px;font-size:11px;line-height:11px;font-weight:700;color:#9a9a9a;">PREVIOUS</div>
<div class="t" style="left:870px;top:638px;font-size:11px;line-height:11px;font-weight:700;color:#fff;">1</div>
<div class="t" style="left:895px;top:638px;font-size:11px;line-height:11px;font-weight:700;color:#9a9a9a;">NEXT</div>
<div class="a" style="left:54px;top:684px;width:213px;height:23px;border-radius:2px;overflow:hidden;background:#efefef;box-shadow:inset 0 -2px 0 #d2d2d2"></div>
<div class="a" style="left:126px;top:684px;width:1px;height:21px;background:#dcdcdc"></div>
<div class="a" style="left:182px;top:684px;width:85px;height:23px;background:#22b13a;box-shadow:inset 0 -2px 0 #1a9a2e;border-radius:0 2px 2px 0"></div>
<svg class="a" style="left:62px;top:692px" width="8" height="6" viewBox="0 0 8 6"><path d="M0.5 3.2 L2 4.8 L4.2 1.8 M3.2 4.8 L7.2 0.8" fill="none" stroke="#555" stroke-width="1"/></svg>
<div class="t" style="left:73px;top:689px;font-size:10px;line-height:10px;font-weight:700;color:#222;">Toggle all</div>
<div class="t" style="left:133px;top:689px;font-size:10px;line-height:10px;font-weight:700;color:#222;">Actions</div>
<svg class="a" style="left:171px;top:692px" width="5" height="3" viewBox="0 0 5 3"><path d="M0 0 H5 L2.5 3 Z" fill="#333"/></svg>
<svg class="a" style="left:190px;top:690.5px" width="8" height="8" viewBox="0 0 8 8"><path d="M4 0.5 V7.5 M0.5 4 H7.5" stroke="#fff" stroke-width="1.1"/></svg>
<div class="t" style="left:201px;top:689px;font-size:10px;line-height:10px;font-weight:700;color:#fff;">Add domain</div>
</body></html>
